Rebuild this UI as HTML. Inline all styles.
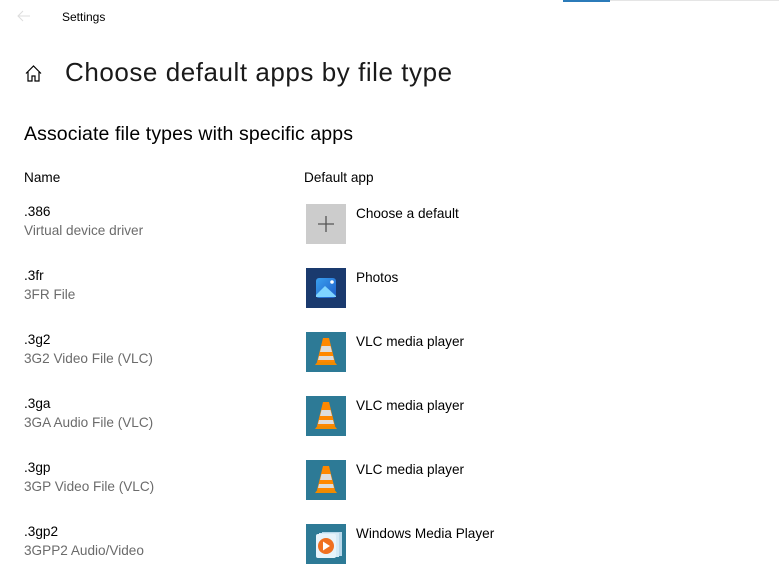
<!DOCTYPE html>
<html><head><meta charset="utf-8"><style>
body{margin:0;width:779px;height:586px;background:#fff;font-family:"Liberation Sans",sans-serif;color:#000;position:relative;overflow:hidden}
.a{position:absolute;white-space:nowrap}
.ic{position:absolute;left:306px;width:40px;height:40px}
.s{font-size:13.6px;color:#000}
.g{font-size:13.6px;color:#6b6b6b}
</style></head><body>
<div class="a" style="left:563px;top:0;width:47px;height:2px;background:#2b7bb9"></div>
<div class="a" style="left:610px;top:0;width:169px;height:1px;background:#e5e5e5"></div>
<svg class="a" style="left:17px;top:10px" width="14" height="12" viewBox="0 0 14 12"><path d="M13 6H1M6 1L1 6l5 5" fill="none" stroke="#ddd" stroke-width="1"/></svg>
<div class="a" style="left:62px;top:10px;font-size:12px">Settings</div>
<svg class="a" style="left:24px;top:64px" width="19" height="19" viewBox="0 0 19 19"><path d="M2 9.5L9.5 2 17 9.5M4 8v9h4v-5h3v5h4V8" fill="none" stroke="#000" stroke-width="1.2"/></svg>
<div class="a" style="left:65px;top:57px;font-size:26px;color:#1a1a1a;letter-spacing:0.55px">Choose default apps by file type</div>
<div class="a" style="left:24px;top:123px;font-size:19.5px;letter-spacing:0.1px">Associate file types with specific apps</div>
<div class="a s" style="left:24px;top:170px">Name</div>
<div class="a s" style="left:304px;top:170px">Default app</div>

<div class="a s" style="left:24px;top:204px">.386</div><div class="a g" style="left:24px;top:223px">Virtual device driver</div>
<div class="ic" style="top:204px;background:#cccccc"><svg width="40" height="40"><path d="M20 12v16M12 20h16" stroke="#555" stroke-width="1.3"/></svg></div>
<div class="a s" style="left:356px;top:206px">Choose a default</div>

<div class="a s" style="left:24px;top:268px">.3fr</div><div class="a g" style="left:24px;top:287px">3FR File</div>
<div class="ic" style="top:268px;background:#1a3a6e"><svg width="40" height="40"><defs><linearGradient id="p" x1="0" y1="0" x2="1" y2="1"><stop offset="0" stop-color="#3aa0f0"/><stop offset="1" stop-color="#1e5ec8"/></linearGradient></defs><rect x="10" y="10" width="20" height="20" rx="3" fill="url(#p)"/><path d="M10 27l9-9 11 10v1H10z" fill="#7fd4ff"/><circle cx="26" cy="14" r="1.8" fill="#fff"/></svg></div>
<div class="a s" style="left:356px;top:270px">Photos</div>

<div class="a s" style="left:24px;top:332px">.3g2</div><div class="a g" style="left:24px;top:351px">3G2 Video File (VLC)</div>
<div class="a s" style="left:24px;top:396px">.3ga</div><div class="a g" style="left:24px;top:415px">3GA Audio File (VLC)</div>
<div class="a s" style="left:24px;top:460px">.3gp</div><div class="a g" style="left:24px;top:479px">3GP Video File (VLC)</div>

<div class="ic" style="top:332px;background:#2d7a96"><svg width="40" height="40"><path d="M9 33l3-4h16l3 4z" fill="#f08a00"/><path d="M17 6h6l6 24H11z" fill="#ff8800"/><path d="M15.5 14h9l1.5 6h-12zM13 24h14l1 4H12z" fill="#ddd"/></svg></div>
<div class="a s" style="left:356px;top:334px">VLC media player</div>
<div class="ic" style="top:396px;background:#2d7a96"><svg width="40" height="40"><path d="M9 33l3-4h16l3 4z" fill="#f08a00"/><path d="M17 6h6l6 24H11z" fill="#ff8800"/><path d="M15.5 14h9l1.5 6h-12zM13 24h14l1 4H12z" fill="#ddd"/></svg></div>
<div class="a s" style="left:356px;top:398px">VLC media player</div>
<div class="ic" style="top:460px;background:#2d7a96"><svg width="40" height="40"><path d="M9 33l3-4h16l3 4z" fill="#f08a00"/><path d="M17 6h6l6 24H11z" fill="#ff8800"/><path d="M15.5 14h9l1.5 6h-12zM13 24h14l1 4H12z" fill="#ddd"/></svg></div>
<div class="a s" style="left:356px;top:462px">VLC media player</div>

<div class="a s" style="left:24px;top:524px">.3gp2</div><div class="a g" style="left:24px;top:543px">3GPP2 Audio/Video</div>
<div class="ic" style="top:524px;background:#2d7a96"><svg width="40" height="40"><rect x="16" y="8" width="20" height="24" fill="#b8d8ea"/><rect x="13" y="9" width="20" height="24" fill="#d6ebf7"/><rect x="10" y="10" width="20" height="24" rx="2" fill="#e8f4fb"/><circle cx="20" cy="22" r="8" fill="#f07020"/><path d="M17 17.5v9l7-4.5z" fill="#fff"/></svg></div>
<div class="a s" style="left:356px;top:526px">Windows Media Player</div>
</body></html>
